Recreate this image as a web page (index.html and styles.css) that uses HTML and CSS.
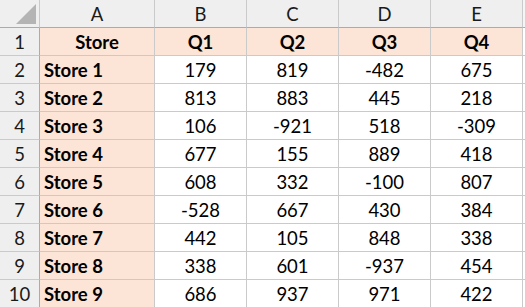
FILE: index.html
```html
<!DOCTYPE html>
<html>
<head>
<meta charset="utf-8">
<link rel="stylesheet" href="styles.css">
</head>
<body>
<div class="sheet">
  <div class="corner"><svg class="tri" width="40" height="28" viewBox="0 0 40 28"><polygon points="16,24 36,24 36,4" fill="#b4b4b4"/></svg></div>
  <div class="ch">A</div><div class="ch">B</div><div class="ch">C</div><div class="ch">D</div><div class="ch">E</div><div class="ch extra"></div>

  <div class="rh">1</div><div class="c hdr">Store</div><div class="c hdr">Q1</div><div class="c hdr">Q2</div><div class="c hdr">Q3</div><div class="c hdr">Q4</div><div class="c blank"></div>
  <div class="rh">2</div><div class="c name">Store 1</div><div class="c">179</div><div class="c">819</div><div class="c">-482</div><div class="c">675</div><div class="c blank"></div>
  <div class="rh">3</div><div class="c name">Store 2</div><div class="c">813</div><div class="c">883</div><div class="c">445</div><div class="c">218</div><div class="c blank"></div>
  <div class="rh">4</div><div class="c name">Store 3</div><div class="c">106</div><div class="c">-921</div><div class="c">518</div><div class="c">-309</div><div class="c blank"></div>
  <div class="rh">5</div><div class="c name">Store 4</div><div class="c">677</div><div class="c">155</div><div class="c">889</div><div class="c">418</div><div class="c blank"></div>
  <div class="rh">6</div><div class="c name">Store 5</div><div class="c">608</div><div class="c">332</div><div class="c">-100</div><div class="c">807</div><div class="c blank"></div>
  <div class="rh">7</div><div class="c name">Store 6</div><div class="c">-528</div><div class="c">667</div><div class="c">430</div><div class="c">384</div><div class="c blank"></div>
  <div class="rh">8</div><div class="c name">Store 7</div><div class="c">442</div><div class="c">105</div><div class="c">848</div><div class="c">338</div><div class="c blank"></div>
  <div class="rh">9</div><div class="c name">Store 8</div><div class="c">338</div><div class="c">601</div><div class="c">-937</div><div class="c">454</div><div class="c blank"></div>
  <div class="rh">10</div><div class="c name">Store 9</div><div class="c">686</div><div class="c">937</div><div class="c">971</div><div class="c">422</div><div class="c blank"></div>
</div>
</body>
</html>
```
FILE: styles.css
```css
html, body {
  margin: 0;
  padding: 0;
  background: #ffffff;
}
.sheet {
  display: grid;
  grid-template-columns: 40px 115px 92px 92px 92px 92px 1fr;
  grid-auto-rows: 28px;
  width: 525px;
  height: 307px;
  overflow: hidden;
  font-family: Lato, "Liberation Sans", sans-serif;
  font-size: 18.5px;
  color: #000;
}
.sheet > div {
  box-sizing: border-box;
  display: flex;
  align-items: center;
  justify-content: center;
  border-right: 1px solid #cacaca;
  border-bottom: 1px solid #cacaca;
  padding-top: 1px;
}
.corner {
  background: #efefef;
  border-right-color: #cacaca !important;
  border-bottom-color: #ababab !important;
  position: relative;
  padding-top: 0 !important;
}
.tri {
  position: absolute;
  left: 0;
  top: 0;
}
.ch {
  background: #efefef;
  color: #1a1a1a;
  border-bottom-color: #ababab !important;
  padding-top: 0 !important;
}
.ch.extra {
  background: #f5f5f5;
  border-right: none !important;
}
.rh {
  background: #efefef;
  color: #1a1a1a;
  border-right-color: #ababab !important;
}
.c {
  background: #ffffff;
}
.hdr {
  background: #fce4d6;
  font-weight: bold;
}
.name {
  background: #fce4d6;
  font-weight: bold;
  justify-content: flex-start !important;
  padding-left: 4px;
}
.blank {
  border-right: none !important;
}
```
